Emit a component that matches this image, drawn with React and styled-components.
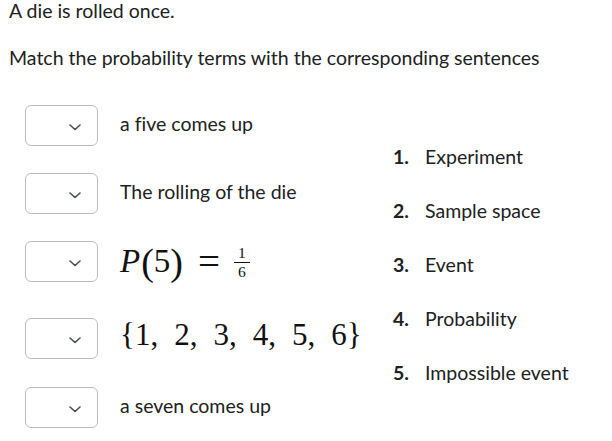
import React from "react";
import styled, { createGlobalStyle } from "styled-components";

const GlobalStyle = createGlobalStyle`
  html, body {
    margin: 0;
    padding: 0;
    background: #ffffff;
  }
  body {
    font-family: Lato, "Noto Sans", sans-serif;
    font-variant-ligatures: none;
    color: #202122;
  }
`;

const rows = [
  { id: 1, kind: "text", label: "a five comes up" },
  { id: 2, kind: "text", label: "The rolling of the die" },
  { id: 3, kind: "prob" },
  { id: 4, kind: "set" },
  { id: 5, kind: "text", label: "a seven comes up" },
];

const terms = ["Experiment", "Sample space", "Event", "Probability", "Impossible event"];

const Chevron = () => (
  <svg width="12" height="7" viewBox="0 0 12 7" fill="none">
    <path d="M1 1l5 4.5L11 1" stroke="#494c4e" strokeWidth="1.6" strokeLinecap="round" strokeLinejoin="round" />
  </svg>
);

const App = () => {
  return (
    <>
      <GlobalStyle />
      <Page>
        <Intro>A die is rolled once.</Intro>
        <Intro>Match the probability terms with the corresponding sentences</Intro>
        <Matching>
          <Choices>
            {rows.map((row) => (
              <Row key={row.id} spaced={row.kind === "set"}>
                <Select>
                  <Chevron />
                </Select>
                {row.kind === "text" && <Label>{row.label}</Label>}
                {row.kind === "prob" && (
                  <MathLine>
                    <MathVar>P</MathVar>
                    <Paren>(</Paren>5<Paren>)</Paren>
                    <Equals>=</Equals>
                    <Frac>
                      <FracPart>1</FracPart>
                      <FracBar />
                      <FracPart>6</FracPart>
                    </Frac>
                  </MathLine>
                )}
                {row.kind === "set" && (
                  <MathLine small>
                    <span>{"{"}</span>
                    {[1, 2, 3, 4, 5, 6].map((n, i) => (
                      <SetItem key={n} last={i === 5}>
                        {n}
                        {i < 5 && ","}
                      </SetItem>
                    ))}
                    <span>{"}"}</span>
                  </MathLine>
                )}
              </Row>
            ))}
          </Choices>
          <Terms>
            {terms.map((t, i) => (
              <Term key={t}>
                <TermNum>{i + 1}.</TermNum>
                <span>{t}</span>
              </Term>
            ))}
          </Terms>
        </Matching>
      </Page>
    </>
  );
};

export default App;

const Page = styled.div`
  padding: 0 9px;
`;

const Intro = styled.p`
  margin: 0;
  font-size: 19.5px;
  line-height: 22px;
  &:first-child {
    margin-bottom: 25px;
  }
`;

const Matching = styled.div`
  display: flex;
  align-items: center;
  margin-top: 36px;
  padding-left: 16px;
`;

const Choices = styled.div`
  display: flex;
  flex-direction: column;
  gap: 27px;
  width: 368px;
`;

const Row = styled.div`
  display: flex;
  align-items: center;
  height: 41px;
  margin: ${(p) => (p.spaced ? "9px 0 1px" : "0")};
`;

const Select = styled.div`
  box-sizing: border-box;
  width: 73px;
  height: 41px;
  border: 1px solid #b9bcbe;
  border-radius: 6px;
  display: flex;
  align-items: center;
  justify-content: flex-end;
  padding: 3px 16px 0 0;
  flex-shrink: 0;
`;

const Label = styled.span`
  margin: 0 0 4px 22px;
  font-size: 19.5px;
`;

const MathLine = styled.span`
  margin: ${(p) => (p.small ? "0 0 8px 22px" : "0 0 0 22px")};
  display: flex;
  align-items: center;
  font-family: "Liberation Serif", "DejaVu Serif", serif;
  font-size: ${(p) => (p.small ? "31px" : "33px")};
  color: #111;
`;

const MathVar = styled.i`
  font-style: italic;
  margin-right: 1px;
`;

const Paren = styled.span`
  font-size: 38px;
`;

const Equals = styled.span`
  font-size: 39px;
  margin: 0 14px 0 15px;
`;

const Frac = styled.span`
  display: inline-flex;
  flex-direction: column;
  align-items: center;
  font-size: 15.5px;
  margin-top: 2px;
`;

const FracPart = styled.span`
  display: block;
  line-height: normal;
`;

const FracBar = styled.span`
  width: 16px;
  height: 1px;
  background: #111;
`;

const SetItem = styled.span`
  margin-right: ${(p) => (p.last ? "0" : "16px")};
`;

const Terms = styled.ol`
  list-style: none;
  margin: 0 0 4px;
  padding: 0;
  display: flex;
  flex-direction: column;
  gap: 30px;
`;

const Term = styled.li`
  display: flex;
  font-size: 19.5px;
  line-height: 24px;
`;

const TermNum = styled.span`
  width: 32px;
  font-weight: 700;
`;
